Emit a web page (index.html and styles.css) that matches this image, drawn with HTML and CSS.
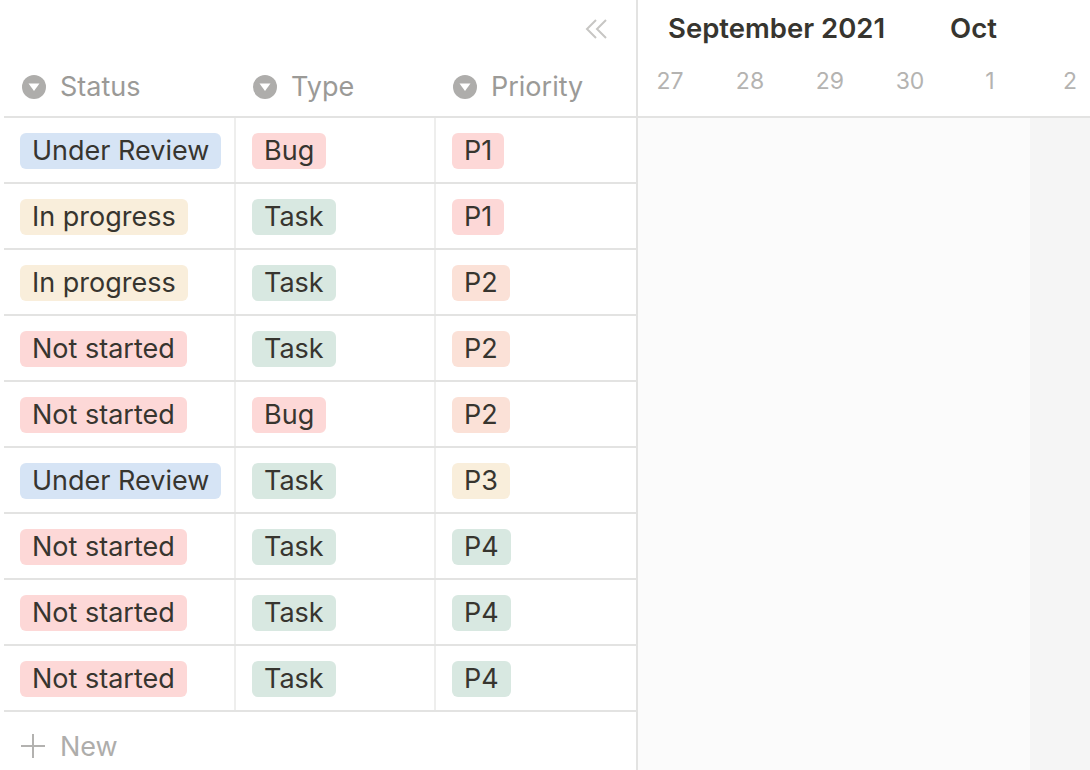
FILE: index.html
```html
<!DOCTYPE html>
<html>
<head>
<meta charset="utf-8">
<link rel="stylesheet" href="styles.css">
</head>
<body>
<div class="app">
  <div class="left">
    <div class="topbar">
      <svg class="collapse" width="26" height="22" viewBox="0 0 26 22"><polyline points="12,2 3,11 12,20" fill="none" stroke="#c7c6c4" stroke-width="2"/><polyline points="22,2 13,11 22,20" fill="none" stroke="#c7c6c4" stroke-width="2"/></svg>
    </div>
    <div class="table">
      <div class="hrow">
        <div class="hcell c1"><svg class="hicon" width="24" height="24" viewBox="0 0 24 24"><circle cx="12" cy="12" r="12" fill="#aeadab"/><polygon points="6.5,8.5 17.5,8.5 12,16" fill="#fff"/></svg><span>Status</span></div>
        <div class="hcell c2"><svg class="hicon" width="24" height="24" viewBox="0 0 24 24"><circle cx="12" cy="12" r="12" fill="#aeadab"/><polygon points="6.5,8.5 17.5,8.5 12,16" fill="#fff"/></svg><span>Type</span></div>
        <div class="hcell c3"><svg class="hicon" width="24" height="24" viewBox="0 0 24 24"><circle cx="12" cy="12" r="12" fill="#aeadab"/><polygon points="6.5,8.5 17.5,8.5 12,16" fill="#fff"/></svg><span>Priority</span></div>
      </div>
      <div class="row"><div class="cell c1"><span class="tag blue">Under Review</span></div><div class="cell c2"><span class="tag red">Bug</span></div><div class="cell c3"><span class="tag red">P1</span></div></div>
      <div class="row"><div class="cell c1"><span class="tag yellow">In progress</span></div><div class="cell c2"><span class="tag green">Task</span></div><div class="cell c3"><span class="tag red">P1</span></div></div>
      <div class="row"><div class="cell c1"><span class="tag yellow">In progress</span></div><div class="cell c2"><span class="tag green">Task</span></div><div class="cell c3"><span class="tag orange">P2</span></div></div>
      <div class="row"><div class="cell c1"><span class="tag red">Not started</span></div><div class="cell c2"><span class="tag green">Task</span></div><div class="cell c3"><span class="tag orange">P2</span></div></div>
      <div class="row"><div class="cell c1"><span class="tag red">Not started</span></div><div class="cell c2"><span class="tag red">Bug</span></div><div class="cell c3"><span class="tag orange">P2</span></div></div>
      <div class="row"><div class="cell c1"><span class="tag blue">Under Review</span></div><div class="cell c2"><span class="tag green">Task</span></div><div class="cell c3"><span class="tag yellow">P3</span></div></div>
      <div class="row"><div class="cell c1"><span class="tag red">Not started</span></div><div class="cell c2"><span class="tag green">Task</span></div><div class="cell c3"><span class="tag green">P4</span></div></div>
      <div class="row"><div class="cell c1"><span class="tag red">Not started</span></div><div class="cell c2"><span class="tag green">Task</span></div><div class="cell c3"><span class="tag green">P4</span></div></div>
      <div class="row"><div class="cell c1"><span class="tag red">Not started</span></div><div class="cell c2"><span class="tag green">Task</span></div><div class="cell c3"><span class="tag green">P4</span></div></div>
      <div class="newrow"><svg width="26" height="26" viewBox="0 0 26 26"><line x1="13" y1="1" x2="13" y2="25" stroke="#b3b2b0" stroke-width="2"/><line x1="1" y1="13" x2="25" y2="13" stroke="#b3b2b0" stroke-width="2"/></svg><span>New</span></div>
    </div>
  </div>
  <div class="timeline">
    <div class="tl-inner">
      <div class="tl-head">
        <div class="months">
          <div class="month sep">September 2021</div>
          <div class="month oct">Oct</div>
        </div>
        <div class="days">
          <div class="day">27</div><div class="day">28</div><div class="day">29</div><div class="day">30</div><div class="day">1</div><div class="day">2</div>
        </div>
      </div>
      <div class="tl-body">
        <div class="col"></div><div class="col"></div><div class="col"></div><div class="col"></div><div class="col"></div><div class="col weekend"></div>
      </div>
    </div>
  </div>
</div>
</body>
</html>
```

FILE: styles.css
```css
* { box-sizing: border-box; }
html, body { margin: 0; padding: 0; background: #fff; }
body {
  font-family: Inter, "Noto Sans", sans-serif;
  color: #37352f;
  width: 1090px;
  height: 770px;
  overflow: hidden;
}
.app { display: flex; height: 770px; }
.left {
  width: 638px;
  flex: none;
  padding-left: 4px;
  border-right: 2px solid #e3e3e2;
}
.topbar {
  height: 51px;
  display: flex;
  justify-content: flex-end;
  align-items: center;
  padding-right: 26px;
  padding-top: 6px;
}
.table { display: flex; flex-direction: column; }
.hrow, .row {
  display: flex;
  border-bottom: 2px solid #e3e3e2;
}
.hrow { height: 67px; padding-top: 6px; }
.row { height: 66px; }
.c1 { width: 230px; }
.c2 { width: 200px; border-left: 2px solid #eeeeed; }
.c3 { width: 200px; border-left: 2px solid #eeeeed; }
.hrow .c2, .hrow .c3 { border-left-color: transparent; }
.hcell {
  display: flex;
  align-items: center;
  gap: 14px;
  padding-left: 18px;
  font-size: 27px;
  color: #9b9a97;
}
.hcell.c2, .hcell.c3 { padding-left: 17px; }
.hicon { flex: none; }
.cell {
  display: flex;
  align-items: center;
  padding-left: 16px;
  padding-top: 1px;
}
.tag {
  display: inline-block;
  font-size: 27px;
  line-height: 36px;
  height: 36px;
  padding: 0 12px;
  border-radius: 6px;
  white-space: nowrap;
}
.blue { background: #d6e4f5; }
.red { background: #fdd8d7; }
.yellow { background: #f9eedb; }
.green { background: #d8e8e1; }
.orange { background: #fbe1d7; }
.newrow {
  height: 68px;
  display: flex;
  align-items: center;
  gap: 14px;
  padding-left: 16px;
  font-size: 27px;
  color: #aeadab;
}
.timeline {
  flex: 1;
  overflow: hidden;
  position: relative;
}
.tl-inner {
  margin-left: -8px;
  width: 480px;
  height: 100%;
  display: flex;
  flex-direction: column;
}
.tl-head {
  height: 118px;
  border-bottom: 2px solid #e3e3e2;
  display: flex;
  flex-direction: column;
}
.months {
  height: 56px;
  display: grid;
  grid-template-columns: 320px 160px;
  align-items: center;
}
.month {
  font-size: 27.5px;
  font-weight: 600;
  color: #37352f;
  white-space: nowrap;
}
.sep { padding-left: 38px; }
.oct { padding-left: 0; }
.days {
  display: grid;
  grid-template-columns: repeat(6, 80px);
  height: 48px;
  padding-top: 2px;
  align-items: center;
}
.day {
  text-align: center;
  font-size: 23px;
  color: #b4b3b1;
}
.tl-body {
  flex: 1;
  display: grid;
  grid-template-columns: repeat(6, 80px);
}
.col { background: #fbfbfb; }
.col.weekend { background: #f5f5f5; }
```
